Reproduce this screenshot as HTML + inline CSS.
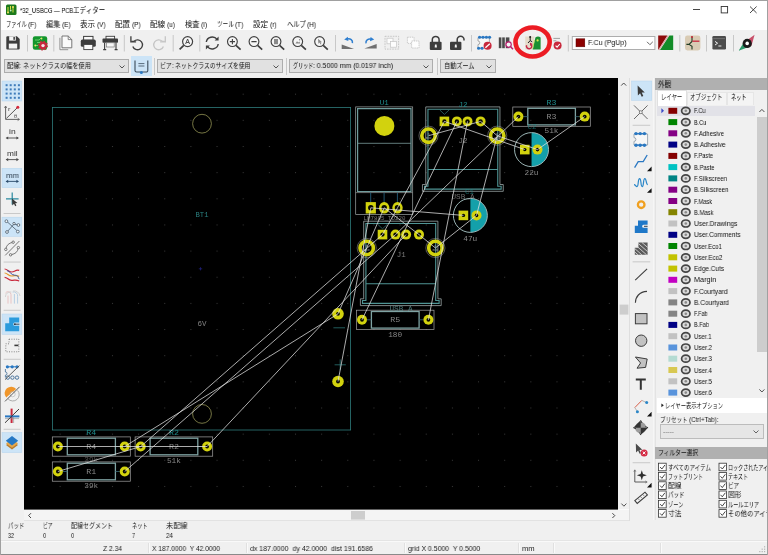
<!DOCTYPE html>
<html lang="ja"><head><meta charset="utf-8"><title>PCB</title>
<style>
*{box-sizing:border-box;margin:0;padding:0}
html,body{width:768px;height:555px;overflow:hidden;background:#fff}
body{position:relative;font-family:"Liberation Sans","Noto Sans CJK JP",sans-serif;font-size:8px;color:#222;line-height:1}
.abs{position:absolute}
.t{position:absolute;white-space:pre;transform-origin:0 50%;line-height:1;will-change:transform}
svg{position:absolute;overflow:visible}
#pcb{will-change:transform}
#frame{position:absolute;left:0;top:0;width:768px;height:555px;border:1px solid #a0a0a0;border-bottom:none;pointer-events:none}
#tb1{left:0;top:30px;width:768px;height:48px;background:#f0f0f0}
#ltb{left:0;top:78px;width:24px;height:441px;background:#f0f0f0}
#canvas{left:24px;top:78px;width:594px;height:432px;background:#000}
#vsb{left:618px;top:78px;width:11px;height:431px;background:#f0f0f0}
#hsb{left:24px;top:510px;width:605px;height:10px;background:#f4f4f4}
#rtb{left:629px;top:78px;width:26px;height:441px;background:#f0f0f0}
#rp{left:655px;top:78px;width:113px;height:441px;background:#f0f0f0}
#msg{left:0;top:518px;width:768px;height:22px;background:#f0f0f0}
#status{left:0;top:540px;width:768px;height:15px;background:#f0f0f0}
.sep{position:absolute;width:1px;background:#c8c8c8}
.combo{position:absolute;background:#e1e1e1;border:1px solid #adadad;height:14px}
.hdr{position:absolute;background:#b0b0b0;color:#111}
.arr{position:absolute;right:3px;top:4.5px;width:6px;height:4px}
</style></head><body>
<div id="title" class="abs" style="left:0;top:0;width:768px;height:30px;background:#fff"></div>
<div id="tb1" class="abs"></div>
<div id="ltb" class="abs"></div>
<div id="canvas" class="abs"></div>
<div id="vsb" class="abs"></div>
<div id="hsb" class="abs"></div>
<div id="rtb" class="abs"></div>
<div id="rp" class="abs"></div>
<div id="msg" class="abs"></div>
<div id="status" class="abs"></div>
<span class="t" style="left:19.50px;top:6.7px;font-size:7.6px;color:#000;transform:scaleX(0.7600);">*32_USBCG — PCB</span><span class="t" style="left:72.75px;top:6.7px;font-size:7.6px;color:#000;transform:scaleX(0.8615);">エディター</span>
<span class="t" style="left:5.50px;top:21.2px;font-size:7.6px;color:#111;transform:scaleX(0.6850);">ファイル </span><span class="t" style="left:27.75px;top:21.2px;font-size:7.6px;color:#111;transform:scaleX(0.8500);">(F)</span>
<span class="t" style="left:46.00px;top:21.2px;font-size:7.6px;color:#111;transform:scaleX(0.9469);">編集 </span><span class="t" style="left:62.39px;top:21.2px;font-size:7.6px;color:#111;transform:scaleX(0.8500);">(E)</span>
<span class="t" style="left:80.00px;top:21.2px;font-size:7.6px;color:#111;transform:scaleX(0.9758);">表示 </span><span class="t" style="left:96.89px;top:21.2px;font-size:7.6px;color:#111;transform:scaleX(0.8500);">(V)</span>
<span class="t" style="left:115.00px;top:21.2px;font-size:7.6px;color:#111;transform:scaleX(0.9758);">配置 </span><span class="t" style="left:131.89px;top:21.2px;font-size:7.6px;color:#111;transform:scaleX(0.8500);">(P)</span>
<span class="t" style="left:150.00px;top:21.2px;font-size:7.6px;color:#111;transform:scaleX(0.9884);">配線 </span><span class="t" style="left:167.11px;top:21.2px;font-size:7.6px;color:#111;transform:scaleX(0.8500);">(u)</span>
<span class="t" style="left:185.00px;top:21.2px;font-size:7.6px;color:#111;transform:scaleX(0.9475);">検査 </span><span class="t" style="left:201.40px;top:21.2px;font-size:7.6px;color:#111;transform:scaleX(0.8500);">(I)</span>
<span class="t" style="left:217.00px;top:21.2px;font-size:7.6px;color:#111;transform:scaleX(0.7409);">ツール </span><span class="t" style="left:235.45px;top:21.2px;font-size:7.6px;color:#111;transform:scaleX(0.8500);">(T)</span>
<span class="t" style="left:253.00px;top:21.2px;font-size:7.6px;color:#111;">設定 </span><span class="t" style="left:270.31px;top:21.2px;font-size:7.6px;color:#111;transform:scaleX(0.8807);">(r)</span>
<span class="t" style="left:286.50px;top:21.2px;font-size:7.6px;color:#111;transform:scaleX(0.8245);">ヘルプ </span><span class="t" style="left:307.04px;top:21.2px;font-size:7.6px;color:#111;transform:scaleX(0.8500);">(H)</span>
<div class="combo" style="left:4px;top:59px;width:125px"><svg class="arr" viewBox="0 0 6 4"><path d="M0.5 0.5 L3 3 L5.5 0.5" fill="none" stroke="#444" stroke-width="0.9"/></svg></div>
<span class="t" style="left:6.75px;top:62.3px;font-size:7.4px;color:#111;transform:scaleX(0.8359);">配線</span><span class="t" style="left:19.12px;top:62.3px;font-size:7.4px;color:#111;transform:scaleX(0.8500);">: </span><span class="t" style="left:22.61px;top:62.3px;font-size:7.4px;color:#111;transform:scaleX(0.8359);">ネットクラスの幅を使用</span>
<div class="abs" style="left:131px;top:56px;width:21px;height:20px;background:#cce4f7"></div>
<div class="sep" style="left:154px;top:58px;height:17px"></div>
<div class="combo" style="left:157px;top:59px;width:126px"><svg class="arr" viewBox="0 0 6 4"><path d="M0.5 0.5 L3 3 L5.5 0.5" fill="none" stroke="#444" stroke-width="0.9"/></svg></div>
<span class="t" style="left:160.00px;top:62.3px;font-size:7.4px;color:#111;transform:scaleX(0.7873);">ビア</span><span class="t" style="left:171.65px;top:62.3px;font-size:7.4px;color:#111;transform:scaleX(0.8500);">: </span><span class="t" style="left:175.14px;top:62.3px;font-size:7.4px;color:#111;transform:scaleX(0.7873);">ネットクラスのサイズを使用</span>
<div class="sep" style="left:286px;top:58px;height:17px"></div>
<div class="combo" style="left:289px;top:59px;width:144px"><svg class="arr" viewBox="0 0 6 4"><path d="M0.5 0.5 L3 3 L5.5 0.5" fill="none" stroke="#444" stroke-width="0.9"/></svg></div>
<span class="t" style="left:292.50px;top:62.3px;font-size:7.4px;color:#111;transform:scaleX(0.6849);">グリッド</span><span class="t" style="left:312.76px;top:62.3px;font-size:7.4px;color:#111;transform:scaleX(0.9300);">: 0.5000 mm (0.0197 inch)</span>
<div class="sep" style="left:437px;top:58px;height:17px"></div>
<div class="combo" style="left:440px;top:59px;width:56px"><svg class="arr" viewBox="0 0 6 4"><path d="M0.5 0.5 L3 3 L5.5 0.5" fill="none" stroke="#444" stroke-width="0.9"/></svg></div>
<span class="t" style="left:443.50px;top:62.3px;font-size:7.4px;color:#111;transform:scaleX(0.8303);">自動ズーム</span>
<svg id="tbi" style="left:0;top:0" width="768" height="78" viewBox="0 0 768 78">
<g fill="#3d3d3d" stroke="none">
<!-- window buttons -->
<rect x="693" y="9" width="7" height="0.9" fill="#333"/>
<rect x="721.2" y="6.5" width="6.4" height="6.4" fill="none" stroke="#333" stroke-width="0.9"/>
<path d="M750 6.5 L756.6 13 M756.6 6.5 L750 13" stroke="#333" stroke-width="0.9" fill="none"/>
<!-- app icon -->
<rect x="6" y="4.5" width="10.5" height="10.5" rx="1.5" fill="#1c7a1c"/>
<path d="M8 7 v6 M10.5 6 v3.5 M13 6.5 v6" stroke="#d8e040" stroke-width="1" fill="none"/>
<circle cx="8" cy="12.5" r="1" fill="#e8e060"/><circle cx="13" cy="7" r="1" fill="#e8e060"/><circle cx="10.7" cy="10.5" r="0.9" fill="#c8f0c0"/>
<!-- separators toolbar1 -->
<g fill="#c8c8c8">
<rect x="27" y="35" width="1" height="16.5"/><rect x="53.3" y="35" width="1" height="16.5"/><rect x="123.8" y="35" width="1" height="16.5"/>
<rect x="172.7" y="35" width="1" height="16.5"/><rect x="199.3" y="35" width="1" height="16.5"/><rect x="335" y="35" width="1" height="16.5"/>
<rect x="471" y="35" width="1" height="16.5"/><rect x="567.8" y="35" width="1" height="16.5"/><rect x="679.3" y="35" width="1" height="16.5"/>
<rect x="706" y="35" width="1" height="16.5"/><rect x="733" y="35" width="1" height="16.5"/>
</g>
<!-- save -->
<path d="M6.3 37.3 a1 1 0 0 1 1-1 h9.6 l2.8 2.8 v9.4 a1 1 0 0 1 -1 1 h-11.4 a1 1 0 0 1 -1-1 z"/>
<rect x="9.2" y="36.3" width="6.6" height="4.3" fill="#f4f4f4"/><rect x="13.4" y="37" width="1.5" height="2.8" fill="#3d3d3d"/>
<rect x="8.8" y="43.6" width="8.4" height="5" fill="#f4f4f4"/>
<!-- board setup -->
<rect x="32.8" y="36.3" width="14.4" height="13.4" rx="2.2" fill="#12962c"/>
<path d="M35 40 h4 l2-2 M35 45.5 h3 M37 42.5 h4" stroke="#7fd67f" stroke-width="0.8" fill="none"/>
<circle cx="35.3" cy="45.5" r="1" fill="#e6e66a"/><circle cx="41.5" cy="38.5" r="0.9" fill="#e6e66a"/>
<circle cx="43" cy="45.6" r="3.9" fill="#c8283c"/><circle cx="43" cy="45.6" r="4.4" fill="none" stroke="#c8283c" stroke-width="1.2" stroke-dasharray="1.6 1.85"/>
<circle cx="43" cy="45.6" r="1.7" fill="#f3e6e6"/>
<!-- new page -->
<path d="M59.9 37.8 v11.9 h8.3" fill="none" stroke="#7a7a7a" stroke-width="0.8"/>
<path d="M62 36 h6.2 l3.6 3.6 v8.2 h-9.8 z" fill="#fafafa" stroke="#6a6a6a" stroke-width="0.9"/>
<path d="M68.2 36 v3.6 h3.6" fill="none" stroke="#6a6a6a" stroke-width="0.8"/>
<!-- print -->
<rect x="83.6" y="36.4" width="9.4" height="4" fill="#fafafa" stroke="#3d3d3d" stroke-width="1"/>
<rect x="80.8" y="39.6" width="15" height="7.2" rx="1.6"/>
<rect x="83.8" y="44.4" width="9" height="5.2" fill="#fafafa" stroke="#3d3d3d" stroke-width="0.9"/>
<!-- plot -->
<rect x="106" y="36.3" width="8.6" height="3" fill="#fafafa" stroke="#3d3d3d" stroke-width="0.9"/>
<rect x="102.5" y="38.6" width="15.5" height="4.2" rx="0.8"/>
<rect x="106.4" y="42.8" width="7.8" height="4.2" fill="#f7f7f7" stroke="#777" stroke-width="0.7"/>
<path d="M104.6 42.8 v6.6 M116 42.8 v6.6 M103.2 49.6 h3 M114.6 49.6 h3" stroke="#3d3d3d" stroke-width="1.1" fill="none"/>
<!-- undo -->
<path d="M131.4 41.3 h2.6 a5 4.9 0 1 1 -1.2 5.2" fill="none" stroke="#404040" stroke-width="1.35"/>
<path d="M130.9 36.2 v5.6 h5.2" fill="none" stroke="#404040" stroke-width="1.35"/>
<!-- redo -->
<path d="M164.8 41.3 h-2.6 a5 4.9 0 1 0 1.2 5.2" fill="none" stroke="#c6c6c6" stroke-width="1.35"/>
<path d="M165.3 36.2 v5.6 h-5.2" fill="none" stroke="#c6c6c6" stroke-width="1.35"/>
<!-- find -->
<circle cx="187.6" cy="41.6" r="5" fill="#f6f6f6" stroke="#404040" stroke-width="1.2"/>
<path d="M183.8 45.4 L179.6 49.4" stroke="#404040" stroke-width="1.7" fill="none"/>
<path d="M185.6 44 l2-5 l2 5 M186.3 42.5 h2.6" stroke="#404040" stroke-width="0.9" fill="none"/>
<!-- refresh -->
<path d="M206.3 42 a6 5.6 0 0 1 10.8-2.6" fill="none" stroke="#404040" stroke-width="1.4"/>
<path d="M218.2 44 a6 5.6 0 0 1 -10.8 2.6" fill="none" stroke="#404040" stroke-width="1.4"/>
<path d="M218.6 36.4 v4 h-4 z M205.9 49.6 v-4 h4 z" fill="#404040"/>
<!-- zoom in/out/fit/obj/sel -->
<g fill="#f6f6f6" stroke="#404040" stroke-width="1.15">
<circle cx="232.4" cy="41.6" r="4.9"/><circle cx="254" cy="41.6" r="4.9"/><circle cx="276" cy="41.6" r="4.9"/><circle cx="297.7" cy="41.6" r="4.9"/><circle cx="319.6" cy="41.6" r="4.9"/>
</g>
<g stroke="#404040" stroke-width="1.7" fill="none">
<path d="M236 45.3 l4.6 4.3 M257.6 45.3 l4.6 4.3 M279.6 45.3 l4.6 4.3 M301.3 45.3 l4.6 4.3 M323.2 45.3 l4.6 4.3"/>
</g>
<path d="M229.8 41.6 h5.2 M232.4 39 v5.2 M251.4 41.6 h5.2" stroke="#404040" stroke-width="1.1" fill="none"/>
<rect x="274" y="39" width="4" height="5.2" fill="#8a8a8a"/>
<path d="M295.4 43.6 l1.6-2.4 l1.4 1.4 l1-1 l0.9 2 z" fill="#8a8a8a"/><circle cx="299.6" cy="39.8" r="0.7" fill="#8a8a8a"/>
<path d="M318 38.8 l0.4 5 l1.2-1.2 l1 1.8 l0.8-0.4 l-0.9-1.8 h1.6 z" fill="#8a8a8a"/>
<!-- rotate ccw -->
<path d="M341.7 49 v-4.6 l12.4 4.6 z" fill="#707070"/>
<path d="M352.4 43.2 c0.6-3.2 -2-5 -5.4-4.2" fill="none" stroke="#2f7fd0" stroke-width="1.5"/>
<path d="M344.2 39.4 l3.6-2.6 l0.6 4.2 z" fill="#2f7fd0"/>
<!-- rotate cw -->
<path d="M376.7 48.6 v-4.6 l-12.4 4.6 z" fill="#707070"/>
<path d="M366 43.4 c-0.6-3.2 2-5 5.4-4.2" fill="none" stroke="#2f7fd0" stroke-width="1.5"/>
<path d="M374.2 39.6 l-3.6-2.6 l-0.6 4.2 z" fill="#2f7fd0"/>
<!-- group (disabled) -->
<rect x="385" y="36.3" width="13.6" height="12.8" fill="none" stroke="#bdbdbd" stroke-width="0.8" stroke-dasharray="1.6 1"/>
<rect x="387" y="38.2" width="6" height="5.6" fill="#fdfdfd" stroke="#c4c4c4" stroke-width="0.7"/>
<rect x="390.6" y="41.6" width="6" height="5.6" fill="#fdfdfd" stroke="#c4c4c4" stroke-width="0.7"/>
<!-- ungroup (disabled) -->
<rect x="407.4" y="37.2" width="6.6" height="6.2" fill="#fbfbfb" stroke="#c0c0c0" stroke-width="0.8" stroke-dasharray="1.4 0.8"/>
<rect x="411.6" y="41" width="7.4" height="7" fill="#fdfdfd" stroke="#c0c0c0" stroke-width="0.8" stroke-dasharray="1.4 0.8"/>
<!-- lock -->
<path d="M432.3 42.4 v-2.6 a3.4 3.4 0 0 1 6.8 0 v2.6" fill="none" stroke="#3d3d3d" stroke-width="1.5"/>
<rect x="429.8" y="41.8" width="11.8" height="8.2" rx="1"/>
<path d="M435 44.6 h1.6 l0.3 3 h-2.2 z" fill="#f4f4f4"/>
<!-- unlock -->
<path d="M457.2 42.4 v-2.8 a3.4 3.4 0 0 1 6.8 0 v1" fill="none" stroke="#3d3d3d" stroke-width="1.5"/>
<rect x="450" y="41.8" width="11.4" height="8.2" rx="1"/>
<path d="M455 44.6 h1.6 l0.3 3 h-2.2 z" fill="#f4f4f4"/>
<!-- footprint editor -->
<path d="M478 37.6 h11.4 v10.4 h-11.4 v-3.4 a1.8 1.8 0 0 0 0-3.6 z" fill="#f7f7f7" stroke="#8a8a8a" stroke-width="0.7"/>
<g fill="#2a78c2"><circle cx="479.6" cy="37.2" r="1.55"/><circle cx="483" cy="37.2" r="1.55"/><circle cx="486.4" cy="37.2" r="1.55"/><circle cx="489.6" cy="37.2" r="1.55"/>
<circle cx="478.6" cy="48.2" r="1.55"/><circle cx="482" cy="48.2" r="1.55"/></g>
<path d="M478.6 37.2 h11.6" stroke="#2a78c2" stroke-width="1" />
<circle cx="487.6" cy="45.8" r="4" fill="#c8283c"/><path d="M485.4 47.8 l4.4-4" stroke="#fff" stroke-width="1.3"/>
<!-- library browser -->
<rect x="498.8" y="37.4" width="2.6" height="10.8" fill="#4a4a4a"/><rect x="502.2" y="37.4" width="2.6" height="10.8" fill="#4a4a4a"/><rect x="505.8" y="37.4" width="3.6" height="10.8" fill="#4a4a4a"/>
<circle cx="508.6" cy="44.6" r="2.7" fill="#f4f4f4" stroke="#b81e6e" stroke-width="1.2"/><path d="M510.6 46.8 l2.4 2.4" stroke="#b81e6e" stroke-width="1.5"/>
<!-- update pcb (circled) -->
<path d="M525.2 36.4 h9.4 l-2.6 13.2 h-6.8 z" fill="#e4dccb"/>
<path d="M535.4 37.4 q2.6-2 5.2 0 v12.2 h-8 z" fill="#1a8f32"/>
<path d="M530.2 36.6 v4 l-2.2 2.4 M530.2 40.6 l2 1.2" stroke="#222" stroke-width="1" fill="none"/><circle cx="530.2" cy="37" r="1" fill="#222"/>
<path d="M526.6 45.2 a2.7 2.7 0 1 0 4.8-0.6" fill="none" stroke="#c8284a" stroke-width="1.5"/><path d="M529.8 42.6 l3 1.5 l-2.6 2 z" fill="#c8284a"/>
<path d="M534.4 40 l-1.6 8.6" stroke="#c8d84a" stroke-width="0.8"/><circle cx="537.6" cy="40.4" r="1.1" fill="#d8e84a"/>
<ellipse cx="532.6" cy="42" rx="17.1" ry="14.5" fill="none" stroke="#ec1c24" stroke-width="4.6"/>
<!-- DRC -->
<path d="M553.4 38.4 h6.6 M553.4 40.8 h3" stroke="#8a8a8a" stroke-width="0.8"/>
<circle cx="557.6" cy="45.6" r="4" fill="#c8283c"/><path d="M555.6 45.6 l1.5 1.6 l2.7-3.2" stroke="#fff" stroke-width="1.1" fill="none"/>
<!-- layer combo -->
<rect x="572.3" y="36.5" width="82.6" height="13" fill="#fff" stroke="#adadad" stroke-width="1"/>
<rect x="576" y="38.8" width="8.8" height="8" fill="#8c0000" stroke="#5a0000" stroke-width="0.5"/>
<path d="M647 41.8 l2.9 2.9 l2.9-2.9" fill="none" stroke="#555" stroke-width="0.9"/>
<!-- layer pair -->
<path d="M658.2 35.6 h9.2 l-9.2 14.4 z" fill="#8c0a0a"/><path d="M673.2 35.6 v14.4 h-13.2 l9.4-14.4 z" fill="#128c28"/>
<path d="M668.4 35.6 l-9.6 14.4" stroke="#d9a0a0" stroke-width="1.1"/>
<!-- scripting / schematic -->
<rect x="685" y="35.6" width="15.4" height="14.8" rx="2.4" fill="#d9cbb4"/>
<path d="M692 36.4 v5 l-3 3 h-2.6 M689 44.4 l3 2 v3 M692 41.4" stroke="#1f3a22" stroke-width="1.1" fill="none"/>
<path d="M692.4 41.2 h7" stroke="#c8283c" stroke-width="1.3"/><circle cx="692" cy="37" r="1" fill="#c8283c"/>
<!-- console -->
<rect x="712.4" y="36" width="13.6" height="13.4" rx="1.2" fill="#4d4d4d"/>
<path d="M713.4 38.6 h11.6" stroke="#8a8a8a" stroke-width="0.6"/>
<path d="M715 41.4 l2.6 1.8 l-2.6 1.8 M718.4 46 h3" stroke="#fff" stroke-width="0.9" fill="none"/>
<!-- compass -->
<path d="M754.6 34.8 l-3.2 11.2 l-7.6-3.6 z" fill="#c8506a"/>
<path d="M738.6 50.8 l5.2-8.4 l7.6 3.6 z" fill="#2a9a6a"/>
<circle cx="747.2" cy="43.4" r="4.6" fill="#1a1a1a"/><circle cx="747.2" cy="43.4" r="1.8" fill="#fff"/>
<!-- toolbar2 track-width icon -->
<path d="M135 60.4 v10 a1.6 1.6 0 0 0 1.6 1.6 h9.6 a1.6 1.6 0 0 0 1.6-1.6 v-10" fill="none" stroke="#3a4a5a" stroke-width="1.1"/>
<path d="M138.4 63.6 h6 M138.4 66 h6" stroke="#3a4a5a" stroke-width="0.8"/>
<circle cx="141.4" cy="72.4" r="1.5" fill="#2a78c2"/>
</g>
</svg>
<span class="t" style="left:588.20px;top:39.2px;font-size:7.6px;color:#111;transform:scaleX(0.9239);">F.Cu (PgUp)</span>
<svg id="lti" style="left:0;top:78px" width="24" height="441" viewBox="0 78 24 441">
<g fill="none">
<!-- selected backgrounds -->
<g fill="#cce4f7" stroke="#b4d4ee" stroke-width="0.5">
<rect x="2" y="81" width="19.8" height="20"/><rect x="2" y="168.3" width="19.8" height="19.4"/><rect x="2" y="217.2" width="19.8" height="19.2"/>
<rect x="2" y="314" width="19.8" height="20.4"/><rect x="2" y="432.6" width="19.8" height="20"/>
</g>
<!-- separators -->
<g fill="#c4c4c4"><rect x="3.6" y="213" width="17" height="0.9"/><rect x="3.6" y="261.6" width="17" height="0.9"/><rect x="3.6" y="309.8" width="17" height="0.9"/><rect x="3.6" y="358.8" width="17" height="0.9"/><rect x="3.6" y="428.8" width="17" height="0.9"/></g>
<!-- grid dots -->
<g fill="#3f7cba">
<rect x="5.6" y="84.2" width="2" height="2"/><rect x="9.7" y="84.2" width="2" height="2"/><rect x="13.8" y="84.2" width="2" height="2"/><rect x="17.9" y="84.2" width="2" height="2"/>
<rect x="5.6" y="88.4" width="2" height="2"/><rect x="9.7" y="88.4" width="2" height="2"/><rect x="13.8" y="88.4" width="2" height="2"/><rect x="17.9" y="88.4" width="2" height="2"/>
<rect x="5.6" y="92.6" width="2" height="2"/><rect x="9.7" y="92.6" width="2" height="2"/><rect x="13.8" y="92.6" width="2" height="2"/><rect x="17.9" y="92.6" width="2" height="2"/>
<rect x="5.6" y="96.8" width="2" height="2"/><rect x="9.7" y="96.8" width="2" height="2"/><rect x="13.8" y="96.8" width="2" height="2"/><rect x="17.9" y="96.8" width="2" height="2"/>
</g>
<!-- polar -->
<path d="M5.6 106.4 v13 h13.4" stroke="#555" stroke-width="0.9"/><path d="M4.4 108 l1.2-2 l1.2 2 M17.6 118.2 l2 1.2 l-2 1.2" stroke="#555" stroke-width="0.7"/>
<path d="M6.4 118.4 L17.4 107.6" stroke="#555" stroke-width="1"/><circle cx="17.8" cy="107.2" r="1.5" fill="#d8283c"/>
<!-- units arrows -->
<g stroke="#4a4a4a" stroke-width="0.9"><path d="M6.6 138 h11.4 M6.6 159.6 h11.4"/></g>
<g fill="#4a4a4a"><path d="M5.6 138 l2.6-1.6 v3.2 z M19 138 l-2.6-1.6 v3.2 z M5.6 159.6 l2.6-1.6 v3.2 z M19 159.6 l-2.6-1.6 v3.2 z"/></g>
<path d="M6.6 181.4 h11.4" stroke="#2a4a6a" stroke-width="0.9"/><path d="M5.6 181.4 l2.6-1.6 v3.2 z M19 181.4 l-2.6-1.6 v3.2 z" fill="#2a4a6a"/>
<!-- cursor cross -->
<path d="M12.2 192.6 v12 M6 198.8 h12.6" stroke="#2a8aa0" stroke-width="1.2"/>
<path d="M12 198.4 l0.4 7 l1.6-1.6 l1.2 2.4 l1.2-0.6 l-1.2-2.4 l2.2-0.2 z" fill="#3a3a3a"/>
<!-- ratsnest -->
<g stroke="#4a5a6a" stroke-width="0.8"><path d="M7 221.6 L17.6 231.2 M7.4 231.6 L14 224 M14 224 L18 225"/><circle cx="6.4" cy="221.2" r="1.4" fill="#f2f8fc"/><circle cx="17.8" cy="231.6" r="1.4" fill="#f2f8fc"/><circle cx="7" cy="232" r="1.4" fill="#f2f8fc"/><circle cx="18.4" cy="225" r="1.4" fill="#f2f8fc"/><circle cx="14" cy="223.6" r="1.2" fill="#f2f8fc"/></g>
<!-- curved ratsnest -->
<g stroke="#5a5a5a" stroke-width="0.8"><path d="M5.2 255.4 L19.4 241 M6 248.4 q1-5 6.6-6 M11.4 254.6 q6-1 6.8-6.4"/><circle cx="5.8" cy="249.4" r="1.2" fill="#f4f4f4"/><circle cx="13.2" cy="242.2" r="1.2" fill="#f4f4f4"/><circle cx="10.6" cy="254.8" r="1.2" fill="#f4f4f4"/><circle cx="18.4" cy="247.6" r="1.2" fill="#f4f4f4"/></g>
<!-- net highlight -->
<path d="M4.6 269 c3 0 3.6 3 7 3 s4-3 7.6-1.6" stroke="#c8283c" stroke-width="1.2"/>
<path d="M4.6 273 c3 0 3.6 3 7 3 s4-1.4 7.6 0.4" stroke="#e89a2a" stroke-width="1.2"/>
<path d="M4.6 277.4 c3 0 3.6 3 7 3 s4-1 7.6 0.6" stroke="#c8283c" stroke-width="1.2"/>
<path d="M7 270.6 c3 0.4 4 4.4 7.6 4.6 s3 1 4.6 4" stroke="#3a5aa8" stroke-width="1"/>
<!-- faded traces -->
<path d="M8 303.6 v-8 M11 303.6 v-9 a3 3 0 0 0 -5.6-1.4" stroke="#e8c4c4" stroke-width="1"/>
<path d="M14.4 303.6 v-9.6 M17.6 303.6 v-7 a4 4 0 0 0 -5-4.6" stroke="#b8cfe4" stroke-width="1"/>
<path d="M5.4 297 a5 5 0 0 1 6-5 M13 291 a6 6 0 0 1 7 5" stroke="#d0d0d0" stroke-width="0.9"/>
<!-- zone fill -->
<path d="M9.2 317.6 h10 v5 h-4.4 a1.6 1.6 0 0 0 0 3.2 h4.4 v5.4 h-14 v-8 h4 z" fill="#2b9bdc"/>
<path d="M15 324.2 h4.4" stroke="#2a3a4a" stroke-width="0.9"/><circle cx="14.8" cy="324.2" r="0.9" fill="#2a3a4a"/>
<!-- zone outline -->
<path d="M9 339.2 h9.8 v12.6 h-13 v-8 h3.2 z" stroke="#6a6a6a" stroke-width="0.8" stroke-dasharray="1 1.4"/>
<path d="M14.4 345.4 h4" stroke="#3a3a3a" stroke-width="1.6"/>
<!-- pad outline -->
<g fill="#2a78c2"><circle cx="7.4" cy="366.8" r="1.6"/><circle cx="12.2" cy="366.8" r="1.6"/><circle cx="17" cy="366.8" r="1.6"/></g><path d="M6 366.8 h12.4" stroke="#2a78c2" stroke-width="1"/>
<path d="M5.4 369 v3 a1.6 1.6 0 0 1 0 3.2 v2" stroke="#2a5a8a" stroke-width="0.7"/>
<g stroke="#2a5a8a" stroke-width="0.8"><circle cx="7.8" cy="377.6" r="1.7"/><circle cx="12.4" cy="377.6" r="1.7"/><circle cx="17" cy="377.6" r="1.7"/></g>
<path d="M5 379.6 L19.4 365.6" stroke="#4a4a4a" stroke-width="0.9"/>
<!-- via outline -->
<path d="M6.2 397.6 a6.4 6.4 0 0 1 10-8.6 z" fill="#f0962a"/><circle cx="12.6" cy="394.2" r="2" fill="#f4f4f4"/>
<path d="M17.6 390.4 a6.2 6.2 0 0 1 -9.6 8.4" stroke="#9a9a9a" stroke-width="0.8"/><circle cx="12.6" cy="394.2" r="2.6" stroke="#b0b0b0" stroke-width="0.6"/>
<path d="M5 401.4 L19.6 386.8" stroke="#4a4a4a" stroke-width="0.9"/>
<!-- track outline -->
<path d="M11.6 408.6 v14.4" stroke="#c8283c" stroke-width="2"/><path d="M5 416.4 h14.4" stroke="#2a78c2" stroke-width="2"/>
<path d="M13.6 417 v6 M5 418.6 h14" stroke="#8a8a8a" stroke-width="0.6"/>
<path d="M5 422.8 L19 409" stroke="#3a3a3a" stroke-width="1"/>
<!-- layers -->
<path d="M12 440.4 l6 4.6 l-6 4.6 l-6-4.6 z" fill="#b87a2a"/><path d="M12 438.8 l6 4.6 l-6 4.4 l-6-4.4 z" fill="#e8a84a"/>
<path d="M12 436 l6.2 4.8 l-6.2 4.8 l-6.2-4.8 z" fill="#2678c4"/>
</g>
</svg>
<span class="t" style="left:7.80px;top:106.9px;font-size:5.4px;color:#444;transform:scaleX(1.3357);">r</span>
<span class="t" style="left:14.40px;top:114.3px;font-size:5.4px;color:#444;">θ</span>
<span class="t" style="left:8.60px;top:128px;font-size:8px;color:#333;transform:scaleX(1.0586);">in</span>
<span class="t" style="left:6.60px;top:149.8px;font-size:8px;color:#333;transform:scaleX(1.0373);">mil</span>
<span class="t" style="left:5.60px;top:172.2px;font-size:8px;color:#2a3a4a;transform:scaleX(0.9604);">mm</span>
<svg id="pcb" style="left:24px;top:78px" width="594" height="432" viewBox="24 78 594 432">
<defs><pattern id="gd" x="33.5" y="93.7" width="26.15" height="26.15" patternUnits="userSpaceOnUse"><rect x="0" y="0" width="1" height="1" fill="#3a3a3a"/></pattern><clipPath id="cv"><rect x="24" y="78" width="594" height="432"/></clipPath></defs>
<g clip-path="url(#cv)" fill="none" font-family="'Liberation Mono',monospace">
<rect x="24" y="78" width="594" height="432" fill="#000"/>
<rect x="24" y="78" width="594" height="432" fill="url(#gd)"/>
<rect x="52.4" y="107.5" width="298.2" height="322.5" stroke="#2f7c7c" stroke-width="0.8"/>
<circle cx="202" cy="123.7" r="9.4" stroke="#a8a860" stroke-width="0.7"/><circle cx="202" cy="413.9" r="9.4" stroke="#a8a860" stroke-width="0.7"/>
<text x="202.0" y="216.6" fill="#2a8080" font-size="6.4" text-anchor="middle" textLength="13" lengthAdjust="spacingAndGlyphs" opacity="1">BT1</text>
<text x="202.0" y="325.8" fill="#808080" font-size="6.4" text-anchor="middle" textLength="9" lengthAdjust="spacingAndGlyphs" opacity="1">6V</text>
<path d="M198.8 268.8 h3.4 M200.5 267.2 v3.2" stroke="#20207a" stroke-width="0.8"/>
<path d="M333.4 327.8 h11.6 M334.6 364.8 h11.2 M340.2 359.4 v10.8" stroke="#2a7474" stroke-width="0.8"/>
<rect x="52.3" y="436.9" width="78.0" height="19.3" stroke="#a4a4a4" stroke-width="0.7"/>
<rect x="67.3" y="438.2" width="48.1" height="16.6" stroke="#7fa3a3" stroke-width="1.3"/>
<path d="M62.9 446.5 H67.3 M115.4 446.5 H119.7" stroke="#3a6a7a" stroke-width="0.8"/>
<rect x="52.3" y="461.9" width="78.0" height="19.3" stroke="#a4a4a4" stroke-width="0.7"/>
<rect x="67.3" y="463.2" width="48.1" height="16.6" stroke="#7fa3a3" stroke-width="1.3"/>
<path d="M62.9 471.5 H67.3 M115.4 471.5 H119.7" stroke="#3a6a7a" stroke-width="0.8"/>
<rect x="135.1" y="436.9" width="77.6" height="19.3" stroke="#a4a4a4" stroke-width="0.7"/>
<rect x="150.1" y="438.2" width="47.7" height="16.6" stroke="#7fa3a3" stroke-width="1.3"/>
<path d="M145.7 446.5 H150.1 M197.79999999999998 446.5 H202.1" stroke="#3a6a7a" stroke-width="0.8"/>
<rect x="512.8" y="107.0" width="77.5" height="19.3" stroke="#a4a4a4" stroke-width="0.7"/>
<rect x="527.8" y="108.3" width="47.6" height="16.6" stroke="#7fa3a3" stroke-width="1.3"/>
<path d="M523.4 116.6 H527.8 M575.4000000000001 116.6 H579.7" stroke="#3a6a7a" stroke-width="0.8"/>
<rect x="356.4" y="310.2" width="77.6" height="19.3" stroke="#a4a4a4" stroke-width="0.7"/>
<rect x="371.4" y="311.5" width="47.7" height="16.6" stroke="#7fa3a3" stroke-width="1.3"/>
<path d="M367 319.8 H371.4 M419.09999999999997 319.8 H423.4" stroke="#3a6a7a" stroke-width="0.8"/>
<rect x="355.7" y="106.9" width="57.0" height="107.6" stroke="#a0a8a8" stroke-width="0.7"/>
<path d="M357.6 191.6 V108.7 H411 V191.6 Z" stroke="#6f9c9c" stroke-width="1.2"/><path d="M357.6 143.3 H411" stroke="#7a9a9a" stroke-width="0.8"/>
<path d="M355.7 192.6 H412.7" stroke="#8a8a8a" stroke-width="0.7"/>
<path d="M370.7 192.6 V203 M384.1 192.6 V203 M397.4 192.6 V203" stroke="#2a6a8a" stroke-width="0.8"/>
<circle cx="384.4" cy="125.9" r="10" fill="#d2d20e"/>
<text x="384.3" y="104.8" fill="#1f8a8a" font-size="6.6" text-anchor="middle" textLength="9" lengthAdjust="spacingAndGlyphs" opacity="1">U1</text>
<text x="384.5" y="220.4" fill="#787878" font-size="6" text-anchor="middle" textLength="42" lengthAdjust="spacingAndGlyphs" opacity="1">LM7805_TO220</text>
<path d="M425.75 184.5 V106.9 H499.95000000000005 V184.5 H503.25000000000006 V191.3 H422.45 V184.5 Z" stroke="#9aa6a6" stroke-width="0.8"/>
<path d="M427.95 186.2 V109.2 H497.75000000000006 V186.2 H501.15000000000003 V189.10000000000002 H424.55 V186.2 Z M427.95 169.5 H497.75000000000006" stroke="#4f9494" stroke-width="1.1"/>
<path d="M439.8 110 l4.6 4.4 l4.6-4.4" stroke="#3a7a7a" stroke-width="0.7"/>
<text x="462.9" y="106.6" fill="#1f8a8a" font-size="6.6" text-anchor="middle" textLength="9" lengthAdjust="spacingAndGlyphs" opacity="1">J2</text>
<text x="462.9" y="142.6" fill="#7c7c7c" font-size="6.6" text-anchor="middle" textLength="9" lengthAdjust="spacingAndGlyphs" opacity="1">J2</text>
<text x="463.0" y="199.0" fill="#6c6c6c" font-size="6.4" text-anchor="middle" textLength="23" lengthAdjust="spacingAndGlyphs" opacity="1">USB_A</text>
<path d="M363.7 298.79999999999995 V221.2 H437.90000000000003 V298.79999999999995 H441.20000000000005 V305.6 H360.4 V298.79999999999995 Z" stroke="#9aa6a6" stroke-width="0.8"/>
<path d="M365.9 300.5 V223.5 H435.70000000000005 V300.5 H439.1 V303.4 H362.5 V300.5 Z M365.9 283.8 H435.70000000000005" stroke="#4f9494" stroke-width="1.1"/>
<path d="M378 224.6 l4.5 4.2 l4.5-4.2" stroke="#3a7a7a" stroke-width="0.7"/>
<text x="401.3" y="256.8" fill="#7c7c7c" font-size="6.6" text-anchor="middle" textLength="9" lengthAdjust="spacingAndGlyphs" opacity="1">J1</text>
<text x="401.0" y="311.0" fill="#5c8c8c" font-size="6.4" text-anchor="middle" textLength="23" lengthAdjust="spacingAndGlyphs" opacity="0.85">USB_A</text>
<path d="M531.55 132.6 A17 17 0 0 1 531.55 166.6 Z" fill="#14a0aa"/>
<circle cx="531.55" cy="149.6" r="17" stroke="#9ab4b4" stroke-width="1"/>
<text x="532.0" y="129.0" fill="#1f8a8a" font-size="6.6" text-anchor="middle" textLength="9" lengthAdjust="spacingAndGlyphs" opacity="0.7">C2</text>
<text x="531.5" y="175.0" fill="#8a8a8a" font-size="7" text-anchor="middle" textLength="14" lengthAdjust="spacingAndGlyphs" opacity="1">22u</text>
<path d="M470.34999999999997 198.4 A17 17 0 0 1 470.34999999999997 232.4 Z" fill="#14a0aa"/>
<circle cx="470.34999999999997" cy="215.4" r="17" stroke="#9ab4b4" stroke-width="1"/>
<text x="469.5" y="194.4" fill="#1f8a8a" font-size="6.6" text-anchor="middle" textLength="9" lengthAdjust="spacingAndGlyphs" opacity="0.7">C1</text>
<text x="470.3" y="240.8" fill="#8a8a8a" font-size="7" text-anchor="middle" textLength="14" lengthAdjust="spacingAndGlyphs" opacity="1">47u</text>
<text x="91.3" y="448.9" fill="#868686" font-size="7" text-anchor="middle" textLength="10" lengthAdjust="spacingAndGlyphs" opacity="1">R4</text>
<text x="91.3" y="461.5" fill="#868686" font-size="7" text-anchor="middle" textLength="14" lengthAdjust="spacingAndGlyphs" opacity="0.6">39k</text>
<text x="91.3" y="434.8" fill="#1f8a8a" font-size="7" text-anchor="middle" textLength="10" lengthAdjust="spacingAndGlyphs" opacity="1">R4</text>
<text x="91.3" y="473.9" fill="#868686" font-size="7" text-anchor="middle" textLength="10" lengthAdjust="spacingAndGlyphs" opacity="1">R1</text>
<text x="91.3" y="488.0" fill="#868686" font-size="7" text-anchor="middle" textLength="14" lengthAdjust="spacingAndGlyphs" opacity="1">39k</text>
<text x="173.9" y="448.9" fill="#868686" font-size="7" text-anchor="middle" textLength="10" lengthAdjust="spacingAndGlyphs" opacity="1">R2</text>
<text x="173.9" y="463.0" fill="#868686" font-size="7" text-anchor="middle" textLength="14" lengthAdjust="spacingAndGlyphs" opacity="1">51k</text>
<text x="173.9" y="434.8" fill="#1f8a8a" font-size="7" text-anchor="middle" textLength="10" lengthAdjust="spacingAndGlyphs" opacity="1">R2</text>
<text x="551.5" y="119.0" fill="#868686" font-size="7" text-anchor="middle" textLength="10" lengthAdjust="spacingAndGlyphs" opacity="1">R3</text>
<text x="551.5" y="133.4" fill="#868686" font-size="7" text-anchor="middle" textLength="14" lengthAdjust="spacingAndGlyphs" opacity="1">51k</text>
<text x="551.5" y="104.6" fill="#1f8a8a" font-size="7" text-anchor="middle" textLength="10" lengthAdjust="spacingAndGlyphs" opacity="1">R3</text>
<text x="395.2" y="322.2" fill="#868686" font-size="7" text-anchor="middle" textLength="10" lengthAdjust="spacingAndGlyphs" opacity="1">R5</text>
<text x="395.2" y="336.6" fill="#868686" font-size="7" text-anchor="middle" textLength="14" lengthAdjust="spacingAndGlyphs" opacity="1">180</text>
<circle cx="57.9" cy="446.5" r="5.0" fill="#d2d20e"/><circle cx="57.9" cy="446.5" r="1.9" fill="#0a0a00"/>
<circle cx="124.7" cy="446.5" r="5.0" fill="#d2d20e"/><circle cx="124.7" cy="446.5" r="1.9" fill="#0a0a00"/>
<circle cx="57.9" cy="471.5" r="5.0" fill="#d2d20e"/><circle cx="57.9" cy="471.5" r="1.9" fill="#0a0a00"/>
<circle cx="124.7" cy="471.5" r="5.0" fill="#d2d20e"/><circle cx="124.7" cy="471.5" r="1.9" fill="#0a0a00"/>
<circle cx="140.7" cy="446.5" r="5.0" fill="#d2d20e"/><circle cx="140.7" cy="446.5" r="1.9" fill="#0a0a00"/>
<circle cx="207.1" cy="446.5" r="5.0" fill="#d2d20e"/><circle cx="207.1" cy="446.5" r="1.9" fill="#0a0a00"/>
<circle cx="518.4" cy="116.6" r="5.0" fill="#d2d20e"/><circle cx="518.4" cy="116.6" r="1.9" fill="#0a0a00"/>
<circle cx="584.7" cy="116.6" r="5.0" fill="#d2d20e"/><circle cx="584.7" cy="116.6" r="1.9" fill="#0a0a00"/>
<circle cx="362" cy="319.8" r="5.0" fill="#d2d20e"/><circle cx="362" cy="319.8" r="1.9" fill="#0a0a00"/>
<circle cx="428.4" cy="319.8" r="5.0" fill="#d2d20e"/><circle cx="428.4" cy="319.8" r="1.9" fill="#0a0a00"/>
<circle cx="338" cy="313.8" r="5.8" fill="#d2d20e"/><circle cx="338" cy="313.8" r="1.9" fill="#0a0a00"/>
<circle cx="338" cy="381.5" r="5.8" fill="#d2d20e"/><circle cx="338" cy="381.5" r="1.9" fill="#0a0a00"/>
<rect x="365.7" y="202.10000000000002" width="10.2" height="11.4" fill="#d2d20e"/><circle cx="370.8" cy="207.8" r="2.7" fill="#0a0a00"/>
<ellipse cx="384.2" cy="207.8" rx="5.2" ry="5.8" fill="#d2d20e"/><circle cx="384.2" cy="207.8" r="2.7" fill="#0a0a00"/>
<ellipse cx="397.5" cy="207.8" rx="5.2" ry="5.8" fill="#d2d20e"/><circle cx="397.5" cy="207.8" r="2.7" fill="#0a0a00"/>
<rect x="377.7" y="229.79999999999998" width="9.6" height="9.6" fill="#d2d20e"/><circle cx="382.5" cy="234.6" r="2.1" fill="#0a0a00"/>
<circle cx="395.5" cy="234.6" r="5.0" fill="#d2d20e"/><circle cx="395.5" cy="234.6" r="2.2" fill="#0a0a00"/>
<circle cx="406.1" cy="234.6" r="5.0" fill="#d2d20e"/><circle cx="406.1" cy="234.6" r="2.2" fill="#0a0a00"/>
<circle cx="419" cy="234.6" r="5.0" fill="#d2d20e"/><circle cx="419" cy="234.6" r="2.2" fill="#0a0a00"/>
<circle cx="366.7" cy="248" r="9.6" stroke="#a0a0a0" stroke-width="0.5"/><circle cx="366.7" cy="248" r="6.7" stroke="#d2d20e" stroke-width="3.6"/>
<text x="366.7" y="247.4" fill="#909090" font-size="3.6" text-anchor="middle" opacity="1">S</text>
<text x="366.7" y="251.4" fill="#909090" font-size="3.2" text-anchor="middle" opacity="1">GND</text>
<circle cx="435.4" cy="248" r="9.6" stroke="#a0a0a0" stroke-width="0.5"/><circle cx="435.4" cy="248" r="6.7" stroke="#d2d20e" stroke-width="3.6"/>
<text x="435.4" y="247.4" fill="#909090" font-size="3.6" text-anchor="middle" opacity="1">S</text>
<text x="435.4" y="251.4" fill="#909090" font-size="3.2" text-anchor="middle" opacity="1">GND</text>
<rect x="439.59999999999997" y="116.60000000000001" width="9.6" height="9.6" fill="#d2d20e"/><circle cx="444.4" cy="121.4" r="2.1" fill="#0a0a00"/>
<circle cx="456.9" cy="121.4" r="5.0" fill="#d2d20e"/><circle cx="456.9" cy="121.4" r="2.2" fill="#0a0a00"/>
<circle cx="467.5" cy="121.4" r="5.0" fill="#d2d20e"/><circle cx="467.5" cy="121.4" r="2.2" fill="#0a0a00"/>
<circle cx="480.6" cy="121.4" r="5.0" fill="#d2d20e"/><circle cx="480.6" cy="121.4" r="2.2" fill="#0a0a00"/>
<circle cx="428.5" cy="135.7" r="9.6" stroke="#a0a0a0" stroke-width="0.5"/><circle cx="428.5" cy="135.7" r="6.7" stroke="#d2d20e" stroke-width="3.6"/>
<text x="428.5" y="135.1" fill="#909090" font-size="3.6" text-anchor="middle" opacity="1">S</text>
<text x="428.5" y="139.1" fill="#909090" font-size="3.2" text-anchor="middle" opacity="1">GND</text>
<circle cx="497.2" cy="135.7" r="9.6" stroke="#a0a0a0" stroke-width="0.5"/><circle cx="497.2" cy="135.7" r="6.7" stroke="#d2d20e" stroke-width="3.6"/>
<text x="497.2" y="135.1" fill="#909090" font-size="3.6" text-anchor="middle" opacity="1">S</text>
<text x="497.2" y="139.1" fill="#909090" font-size="3.2" text-anchor="middle" opacity="1">GND</text>
<rect x="458.59999999999997" y="210.6" width="9.6" height="9.6" fill="#d2d20e"/><circle cx="463.4" cy="215.4" r="1.7" fill="#0a0a00"/>
<circle cx="476.5" cy="215.4" r="5.0" fill="#d2d20e"/><circle cx="476.5" cy="215.4" r="1.8" fill="#0a0a00"/>
<rect x="520.0" y="144.79999999999998" width="9.6" height="9.6" fill="#d2d20e"/><circle cx="524.8" cy="149.6" r="1.7" fill="#0a0a00"/>
<circle cx="537.5" cy="149.6" r="5.0" fill="#d2d20e"/><circle cx="537.5" cy="149.6" r="1.8" fill="#0a0a00"/>
<path d="M57.9 446.5 L207.1 446.5 M57.9 471.5 L140.7 446.5 M124.7 446.5 L338 313.8 M140.7 446.5 L382.5 234.6 M124.7 471.5 L395.5 234.6 M207.1 446.5 L406.1 234.6 M366.7 248 L338 313.8 M370.8 207.8 L338 381.5 M456.9 121.4 L362 319.8 M467.5 121.4 L428.4 319.8 M444.4 121.4 L397.5 207.8 M397.5 207.8 L382.5 234.6 M370.8 207.8 L463.4 215.4 M384.2 207.8 L419 234.6 M419 234.6 L435.4 248 M476.5 215.4 L435.4 248 M497.2 135.7 L476.5 215.4 M518.4 116.6 L395.5 234.6 M428.5 135.7 L480.6 121.4 M480.6 121.4 L497.2 135.7 M444.4 121.4 L524.8 149.6 M497.2 135.7 L537.5 149.6 M384.2 207.8 L366.7 248 M584.7 116.6 L537.5 149.6 " stroke="#e4e4e4" stroke-width="0.75"/>
</g></svg>
<svg id="rti" style="left:618px;top:78px" width="38" height="441" viewBox="618 78 38 441">
<g fill="none">
<rect x="629.2" y="78" width="0.8" height="442" fill="#dadada"/><rect x="653.2" y="78" width="1.6" height="442" fill="#f8f8f8"/><rect x="654.8" y="78" width="0.6" height="442" fill="#d0d0d0"/>
<!-- vscroll -->
<path d="M621.2 85.6 l2.5-2.6 l2.5 2.6" stroke="#505050" stroke-width="1"/>
<path d="M621.4 503.6 l2.5 2.6 l2.5-2.6" stroke="#505050" stroke-width="1"/>
<rect x="619.6" y="304.6" width="8.8" height="10" fill="#cdcdcd"/>
<!-- selected -->
<rect x="631.6" y="81" width="20.2" height="19.4" fill="#cce4f7" stroke="#b4d4ee" stroke-width="0.5"/>
<path d="M637.6 85.4 l0.3 10 l2.2-2.2 l1.6 3.6 l1.6-0.7 l-1.6-3.5 l3.1-0.2 z" fill="#3a3a3a"/>
<!-- local ratsnest -->
<path d="M634 105.4 L647.6 119 M647.6 105.4 L634 119" stroke="#5a5a5a" stroke-width="0.9"/><circle cx="640.8" cy="112.2" r="1.5" fill="#f4f4f4" stroke="#5a5a5a" stroke-width="0.7"/>
<!-- seps -->
<g fill="#c4c4c4"><rect x="632.6" y="124.8" width="17.6" height="0.9"/><rect x="632.6" y="261.4" width="17.6" height="0.9"/><rect x="632.6" y="462.3" width="17.6" height="0.9"/></g>
<!-- footprint -->
<path d="M634 134 h13.6 v11 h-13.6 v-3.6 a1.9 1.9 0 0 0 0-3.8 z" fill="#f7f7f7" stroke="#7a8a9a" stroke-width="0.7"/>
<g fill="#2a78c2"><circle cx="636" cy="133.6" r="1.7"/><circle cx="640.2" cy="133.6" r="1.7"/><circle cx="644.4" cy="133.6" r="1.7"/><circle cx="636" cy="145.2" r="1.7"/><circle cx="640.2" cy="145.2" r="1.7"/><circle cx="644.4" cy="145.2" r="1.7"/></g>
<path d="M634.6 133.6 h11.8 M634.6 145.2 h11.8" stroke="#2a78c2" stroke-width="1.2"/>
<!-- route -->
<path d="M634.6 167.6 l3.6-6 h5 l4-6.6" stroke="#2a78c2" stroke-width="1.3"/>
<path d="M651.6 166.6 v4.6 h-4.6 z M651.6 188.2 v4.6 h-4.6 z M651.6 411.8 v4.6 h-4.6 z M651.6 482.8 v4.6 h-4.6 z" fill="#111"/>
<!-- tune -->
<path d="M634 184.6 c1.6 0 1.6 2 3 2 c1.8 0 0.6-8 2.6-8 s0.8 8 2.6 8 s0.8-8 2.6-8 s1 6 3 6" stroke="#2a86c8" stroke-width="1.2"/>
<!-- via -->
<circle cx="641.2" cy="204.7" r="3.3" stroke="#f0a020" stroke-width="2.3"/>
<!-- zone -->
<path d="M638 220.6 h9.6 v4.2 h-4 a1.5 1.5 0 0 0 0 3 h4 v5.2 h-12.8 v-7.2 h3.2 z" fill="#1f78c8"/>
<path d="M644 226.3 h3.6" stroke="#1a2a3a" stroke-width="0.9"/>
<!-- rule area -->
<path d="M638.4 242.4 h9.2 v12.4 h-12.8 v-7 h3.6 z" fill="#5a5a5a"/>
<path d="M638.4 243.6 l9.2 8 M641.8 242.4 l5.8 5 M636.6 246 l10 8.8 M634.8 248.6 l7 6.2 M634.8 252 l3.2 2.8" stroke="#e4e4e4" stroke-width="0.8"/>
<!-- line, arc -->
<path d="M635.2 280.2 L647.1 268.9" stroke="#3d3d3d" stroke-width="1.1"/>
<path d="M635.4 302.8 c0-6 4-11 11.6-11.4" stroke="#3d3d3d" stroke-width="1.1"/>
<rect x="635.4" y="313.6" width="11.6" height="10.2" fill="#c2c2c2" stroke="#3d3d3d" stroke-width="1"/>
<circle cx="641.2" cy="340.7" r="5.7" fill="#c2c2c2" stroke="#3d3d3d" stroke-width="1"/>
<path d="M635.4 357 L647.2 359 L645.6 367.4 L637 368.2 L640.6 363 Z" fill="#c2c2c2" stroke="#3d3d3d" stroke-width="1"/>
<!-- T -->
<path d="M635.8 379.6 h10 M640.8 379.6 v10.2" stroke="#333" stroke-width="2"/>
<!-- dimension -->
<path d="M634.8 407.6 L641.8 400.4" stroke="#d8604a" stroke-width="1"/><path d="M634.8 407.6 L637.4 411.6 M641.8 400.4 L646.6 402.6" stroke="#8a8a8a" stroke-width="0.6"/>
<circle cx="637.4" cy="411.8" r="1.5" fill="#2a86c8"/><circle cx="646.7" cy="402.5" r="1.5" fill="#2a86c8"/>
<!-- origin target -->
<circle cx="640.7" cy="427.7" r="5.6" fill="#9c9c9c"/>
<path d="M640.7 427.7 L640.7 420.3 L633.3 427.7 Z M640.7 427.7 L648.1 427.7 L640.7 435.1 Z" fill="#333"/>
<path d="M640.7 420.3 L642 423 M648.1 427.7 L645.4 426.6 M640.7 435.1 L639.6 432.6 M633.3 427.7 L636 428.8" stroke="#333" stroke-width="1"/>
<!-- delete -->
<path d="M635.8 443.6 l0.3 9 l2-2 l1.5 3.2 l1.4-0.6 l-1.5-3.2 l2.8-0.2 z" fill="#4a4a4a"/>
<circle cx="644.1" cy="452.9" r="3.5" fill="#d42a44"/><path d="M642.7 451.5 l2.8 2.8 M645.5 451.5 l-2.8 2.8" stroke="#fff" stroke-width="1"/>
<!-- grid origin -->
<path d="M634.8 470.4 v11.6 h11.6" stroke="#4a4a4a" stroke-width="0.9"/><path d="M633.8 471.6 l1-1.8 l1 1.8 M645.4 481 l1.8 1 l-1.8 1" stroke="#4a4a4a" stroke-width="0.6"/>
<path d="M641.8 470.2 l1.2 3.8 l3.8 1.2 l-3.8 1.2 l-1.2 3.8 l-1.2-3.8 l-3.8-1.2 l3.8-1.2 z" fill="#2d2d2d"/>
<!-- ruler -->
<path d="M634.8 500.6 l10.2-8.4 l2.4 2.8 l-10.2 8.4 z" stroke="#3d3d3d" stroke-width="1.1"/>
<path d="M638.2 498.6 l1 1.2 M640.6 496.6 l1 1.2 M643 494.6 l1 1.2" stroke="#3d3d3d" stroke-width="0.7"/>
</g>
</svg>
<!-- right panel -->
<div class="hdr" style="left:655px;top:78px;width:113px;height:12px"></div>
<span class="t" style="left:658.20px;top:80.6px;font-size:7.6px;color:#111;transform:scaleX(0.8757);">外観</span>
<div class="abs" style="left:656.5px;top:90px;width:30.5px;height:15.5px;background:#fff;border:1px solid #e0e0e0;border-bottom:none"></div>
<div class="abs" style="left:687px;top:92px;width:40px;height:13px;background:#f4f4f4;border:1px solid #e6e6e6;border-bottom:none"></div>
<div class="abs" style="left:727px;top:92px;width:27px;height:13px;background:#f4f4f4;border:1px solid #e6e6e6;border-bottom:none"></div>
<span class="t" style="left:660.90px;top:94px;font-size:7.6px;color:#111;transform:scaleX(0.7063);">レイヤー</span>
<span class="t" style="left:690.30px;top:94px;font-size:7.6px;color:#111;transform:scaleX(0.7111);">オブジェクト</span>
<span class="t" style="left:730.80px;top:94px;font-size:7.6px;color:#111;transform:scaleX(0.6760);">ネット</span>
<div class="abs" style="left:657px;top:105.5px;width:111px;height:292.5px;background:#f0f0f0"></div>
<div class="abs" style="left:657px;top:106px;width:97.5px;height:10.2px;background:#e2e2e8"></div>
<div class="abs" style="left:755.5px;top:103px;width:12.5px;height:295px;background:#f0f0f0"></div>
<div class="abs" style="left:756.5px;top:117px;width:10.5px;height:235px;background:#cdcdcd"></div>
<svg style="left:655px;top:103px" width="113" height="295" viewBox="655 103 113 295"><g fill="none">
<path d="M759.4 112 l2.5-2.6 l2.5 2.6 M759.4 389.4 l2.5 2.6 l2.5-2.6" stroke="#505050" stroke-width="1"/>
<path d="M661.4 108.2 l2.6 2.5 l-2.6 2.5 z" fill="#3a4ac8"/>
<rect x="668.4" y="107.8" width="8.8" height="6" fill="#840000"/>
<ellipse cx="685.8" cy="110.8" rx="4.2" ry="3.5" stroke="#454545" stroke-width="1.7" fill="#dcdcdc"/><circle cx="685.8" cy="110.8" r="1.3" fill="#8a8a8a"/>
<rect x="668.4" y="119.1" width="8.8" height="6" fill="#008400"/>
<ellipse cx="685.8" cy="122.1" rx="4.2" ry="3.5" stroke="#454545" stroke-width="1.7" fill="#dcdcdc"/><circle cx="685.8" cy="122.1" r="1.3" fill="#8a8a8a"/>
<rect x="668.4" y="130.3" width="8.8" height="6" fill="#840084"/>
<ellipse cx="685.8" cy="133.3" rx="4.2" ry="3.5" stroke="#454545" stroke-width="1.7" fill="#dcdcdc"/><circle cx="685.8" cy="133.3" r="1.3" fill="#8a8a8a"/>
<rect x="668.4" y="141.6" width="8.8" height="6" fill="#000084"/>
<ellipse cx="685.8" cy="144.6" rx="4.2" ry="3.5" stroke="#454545" stroke-width="1.7" fill="#dcdcdc"/><circle cx="685.8" cy="144.6" r="1.3" fill="#8a8a8a"/>
<rect x="668.4" y="152.9" width="8.8" height="6" fill="#840000"/>
<ellipse cx="685.8" cy="155.9" rx="4.2" ry="3.5" stroke="#454545" stroke-width="1.7" fill="#dcdcdc"/><circle cx="685.8" cy="155.9" r="1.3" fill="#8a8a8a"/>
<rect x="668.4" y="164.1" width="8.8" height="6" fill="#00c2c2"/>
<ellipse cx="685.8" cy="167.1" rx="4.2" ry="3.5" stroke="#454545" stroke-width="1.7" fill="#dcdcdc"/><circle cx="685.8" cy="167.1" r="1.3" fill="#8a8a8a"/>
<rect x="668.4" y="175.4" width="8.8" height="6" fill="#008484"/>
<ellipse cx="685.8" cy="178.4" rx="4.2" ry="3.5" stroke="#454545" stroke-width="1.7" fill="#dcdcdc"/><circle cx="685.8" cy="178.4" r="1.3" fill="#8a8a8a"/>
<rect x="668.4" y="186.7" width="8.8" height="6" fill="#840084"/>
<ellipse cx="685.8" cy="189.7" rx="4.2" ry="3.5" stroke="#454545" stroke-width="1.7" fill="#dcdcdc"/><circle cx="685.8" cy="189.7" r="1.3" fill="#8a8a8a"/>
<rect x="668.4" y="198.0" width="8.8" height="6" fill="#840084"/>
<ellipse cx="685.8" cy="201.0" rx="4.2" ry="3.5" stroke="#454545" stroke-width="1.7" fill="#dcdcdc"/><circle cx="685.8" cy="201.0" r="1.3" fill="#8a8a8a"/>
<rect x="668.4" y="209.2" width="8.8" height="6" fill="#848400"/>
<ellipse cx="685.8" cy="212.2" rx="4.2" ry="3.5" stroke="#454545" stroke-width="1.7" fill="#dcdcdc"/><circle cx="685.8" cy="212.2" r="1.3" fill="#8a8a8a"/>
<rect x="668.4" y="220.5" width="8.8" height="6" fill="#c2c2c2"/>
<ellipse cx="685.8" cy="223.5" rx="4.2" ry="3.5" stroke="#454545" stroke-width="1.7" fill="#dcdcdc"/><circle cx="685.8" cy="223.5" r="1.3" fill="#8a8a8a"/>
<rect x="668.4" y="231.8" width="8.8" height="6" fill="#000084"/>
<ellipse cx="685.8" cy="234.8" rx="4.2" ry="3.5" stroke="#454545" stroke-width="1.7" fill="#dcdcdc"/><circle cx="685.8" cy="234.8" r="1.3" fill="#8a8a8a"/>
<rect x="668.4" y="243.0" width="8.8" height="6" fill="#008400"/>
<ellipse cx="685.8" cy="246.0" rx="4.2" ry="3.5" stroke="#454545" stroke-width="1.7" fill="#dcdcdc"/><circle cx="685.8" cy="246.0" r="1.3" fill="#8a8a8a"/>
<rect x="668.4" y="254.3" width="8.8" height="6" fill="#c2c200"/>
<ellipse cx="685.8" cy="257.3" rx="4.2" ry="3.5" stroke="#454545" stroke-width="1.7" fill="#dcdcdc"/><circle cx="685.8" cy="257.3" r="1.3" fill="#8a8a8a"/>
<rect x="668.4" y="265.6" width="8.8" height="6" fill="#c2c200"/>
<ellipse cx="685.8" cy="268.6" rx="4.2" ry="3.5" stroke="#454545" stroke-width="1.7" fill="#dcdcdc"/><circle cx="685.8" cy="268.6" r="1.3" fill="#8a8a8a"/>
<rect x="668.4" y="276.8" width="8.8" height="6" fill="#c200c2"/>
<ellipse cx="685.8" cy="279.8" rx="4.2" ry="3.5" stroke="#454545" stroke-width="1.7" fill="#dcdcdc"/><circle cx="685.8" cy="279.8" r="1.3" fill="#8a8a8a"/>
<rect x="668.4" y="288.1" width="8.8" height="6" fill="#c2c2c2"/>
<ellipse cx="685.8" cy="291.1" rx="4.2" ry="3.5" stroke="#454545" stroke-width="1.7" fill="#dcdcdc"/><circle cx="685.8" cy="291.1" r="1.3" fill="#8a8a8a"/>
<rect x="668.4" y="299.4" width="8.8" height="6" fill="#848484"/>
<ellipse cx="685.8" cy="302.4" rx="4.2" ry="3.5" stroke="#454545" stroke-width="1.7" fill="#dcdcdc"/><circle cx="685.8" cy="302.4" r="1.3" fill="#8a8a8a"/>
<rect x="668.4" y="310.7" width="8.8" height="6" fill="#848484"/>
<ellipse cx="685.8" cy="313.7" rx="4.2" ry="3.5" stroke="#454545" stroke-width="1.7" fill="#dcdcdc"/><circle cx="685.8" cy="313.7" r="1.3" fill="#8a8a8a"/>
<rect x="668.4" y="321.9" width="8.8" height="6" fill="#000084"/>
<ellipse cx="685.8" cy="324.9" rx="4.2" ry="3.5" stroke="#454545" stroke-width="1.7" fill="#dcdcdc"/><circle cx="685.8" cy="324.9" r="1.3" fill="#8a8a8a"/>
<rect x="668.4" y="333.2" width="8.8" height="6" fill="#c2c2c2"/>
<ellipse cx="685.8" cy="336.2" rx="4.2" ry="3.5" stroke="#454545" stroke-width="1.7" fill="#dcdcdc"/><circle cx="685.8" cy="336.2" r="1.3" fill="#8a8a8a"/>
<rect x="668.4" y="344.5" width="8.8" height="6" fill="#5994dc"/>
<ellipse cx="685.8" cy="347.5" rx="4.2" ry="3.5" stroke="#454545" stroke-width="1.7" fill="#dcdcdc"/><circle cx="685.8" cy="347.5" r="1.3" fill="#8a8a8a"/>
<rect x="668.4" y="355.7" width="8.8" height="6" fill="#b4dbd2"/>
<ellipse cx="685.8" cy="358.7" rx="4.2" ry="3.5" stroke="#454545" stroke-width="1.7" fill="#dcdcdc"/><circle cx="685.8" cy="358.7" r="1.3" fill="#8a8a8a"/>
<rect x="668.4" y="367.0" width="8.8" height="6" fill="#d8c852"/>
<ellipse cx="685.8" cy="370.0" rx="4.2" ry="3.5" stroke="#454545" stroke-width="1.7" fill="#dcdcdc"/><circle cx="685.8" cy="370.0" r="1.3" fill="#8a8a8a"/>
<rect x="668.4" y="378.3" width="8.8" height="6" fill="#c2c2c2"/>
<ellipse cx="685.8" cy="381.3" rx="4.2" ry="3.5" stroke="#454545" stroke-width="1.7" fill="#dcdcdc"/><circle cx="685.8" cy="381.3" r="1.3" fill="#8a8a8a"/>
<rect x="668.4" y="389.6" width="8.8" height="6" fill="#5994dc"/>
<ellipse cx="685.8" cy="392.6" rx="4.2" ry="3.5" stroke="#454545" stroke-width="1.7" fill="#dcdcdc"/><circle cx="685.8" cy="392.6" r="1.3" fill="#8a8a8a"/>
</g></svg>
<span class="t" style="left:694.00px;top:107.35px;font-size:7.3px;color:#111;transform:scaleX(0.7659);">F.Cu</span>
<span class="t" style="left:694.00px;top:118.65px;font-size:7.3px;color:#111;transform:scaleX(0.7392);">B.Cu</span>
<span class="t" style="left:694.00px;top:129.85px;font-size:7.3px;color:#111;transform:scaleX(0.8403);">F.Adhesive</span>
<span class="t" style="left:694.00px;top:141.15px;font-size:7.3px;color:#111;transform:scaleX(0.8532);">B.Adhesive</span>
<span class="t" style="left:694.00px;top:152.45px;font-size:7.3px;color:#111;transform:scaleX(0.7805);">F.Paste</span>
<span class="t" style="left:694.00px;top:163.65px;font-size:7.3px;color:#111;transform:scaleX(0.8020);">B.Paste</span>
<span class="t" style="left:694.00px;top:174.95px;font-size:7.3px;color:#111;transform:scaleX(0.8388);">F.Silkscreen</span>
<span class="t" style="left:694.00px;top:186.25px;font-size:7.3px;color:#111;transform:scaleX(0.8505);">B.Silkscreen</span>
<span class="t" style="left:694.00px;top:197.55px;font-size:7.3px;color:#111;transform:scaleX(0.7789);">F.Mask</span>
<span class="t" style="left:694.00px;top:208.75px;font-size:7.3px;color:#111;transform:scaleX(0.8015);">B.Mask</span>
<span class="t" style="left:694.00px;top:220.05px;font-size:7.3px;color:#111;transform:scaleX(0.9167);">User.Drawings</span>
<span class="t" style="left:694.00px;top:231.35px;font-size:7.3px;color:#111;transform:scaleX(0.8889);">User.Comments</span>
<span class="t" style="left:694.00px;top:242.55px;font-size:7.3px;color:#111;transform:scaleX(0.8316);">User.Eco1</span>
<span class="t" style="left:694.00px;top:253.85px;font-size:7.3px;color:#111;transform:scaleX(0.8464);">User.Eco2</span>
<span class="t" style="left:694.00px;top:265.15px;font-size:7.3px;color:#111;transform:scaleX(0.8803);">Edge.Cuts</span>
<span class="t" style="left:694.00px;top:276.35px;font-size:7.3px;color:#111;transform:scaleX(0.9860);">Margin</span>
<span class="t" style="left:694.00px;top:287.65px;font-size:7.3px;color:#111;transform:scaleX(0.8882);">F.Courtyard</span>
<span class="t" style="left:694.00px;top:298.95px;font-size:7.3px;color:#111;transform:scaleX(0.8989);">B.Courtyard</span>
<span class="t" style="left:694.00px;top:310.25px;font-size:7.3px;color:#111;transform:scaleX(0.7397);">F.Fab</span>
<span class="t" style="left:694.00px;top:321.45px;font-size:7.3px;color:#111;transform:scaleX(0.7705);">B.Fab</span>
<span class="t" style="left:694.00px;top:332.75px;font-size:7.3px;color:#111;transform:scaleX(0.8296);">User.1</span>
<span class="t" style="left:694.00px;top:344.05px;font-size:7.3px;color:#111;transform:scaleX(0.8533);">User.2</span>
<span class="t" style="left:694.00px;top:355.25px;font-size:7.3px;color:#111;transform:scaleX(0.8533);">User.3</span>
<span class="t" style="left:694.00px;top:366.55px;font-size:7.3px;color:#111;transform:scaleX(0.8533);">User.4</span>
<span class="t" style="left:694.00px;top:377.85px;font-size:7.3px;color:#111;transform:scaleX(0.8533);">User.5</span>
<span class="t" style="left:694.00px;top:389.15px;font-size:7.3px;color:#111;transform:scaleX(0.8533);">User.6</span>
<div class="abs" style="left:657px;top:398px;width:111px;height:15px;background:#fff"></div>
<svg style="left:657px;top:398px" width="20" height="15" viewBox="657 398 20 15"><path d="M661.4 403.4 l2.4 1.9 l-2.4 1.9 z" fill="#222"/></svg>
<span class="t" style="left:665.00px;top:401.7px;font-size:7.4px;color:#111;transform:scaleX(0.7154);">レイヤー表示オプション</span>
<span class="t" style="left:659.50px;top:415.7px;font-size:7.4px;color:#222;transform:scaleX(0.7434);">プリセット </span><span class="t" style="left:688.50px;top:415.7px;font-size:7.4px;color:#222;transform:scaleX(0.8500);">(Ctrl+Tab):</span>
<div class="combo" style="left:659.5px;top:424.4px;width:104px;height:14.2px;background:#e6e6e6;border-color:#bcbcbc"><svg class="arr" style="right:3.5px;top:5px" viewBox="0 0 6 4"><path d="M0.5 0.5 L3 3 L5.5 0.5" fill="none" stroke="#555" stroke-width="0.9"/></svg></div>
<span class="t" style="left:663.00px;top:427.9px;font-size:7.4px;color:#777;transform:scaleX(0.8934);">-----</span>
<div class="hdr" style="left:655px;top:446.6px;width:113px;height:12.2px"></div>
<span class="t" style="left:658.00px;top:449.1px;font-size:7.4px;color:#111;transform:scaleX(0.7753);">フィルター選択</span>
<svg style="left:655px;top:460px" width="113" height="60" viewBox="655 460 113 60"><g fill="#fff" stroke="#333" stroke-width="0.8">
<rect x="658.6" y="463.2" width="7.6" height="7.6"/><path d="M660.1 467.0 l1.8 2 l3-4" fill="none" stroke-width="0.9"/>
<rect x="719" y="463.2" width="7.6" height="7.6"/><path d="M720.5 467.0 l1.8 2 l3-4" fill="none" stroke-width="0.9"/>
<rect x="658.6" y="472.5" width="7.6" height="7.6"/><path d="M660.1 476.3 l1.8 2 l3-4" fill="none" stroke-width="0.9"/>
<rect x="719" y="472.5" width="7.6" height="7.6"/><path d="M720.5 476.3 l1.8 2 l3-4" fill="none" stroke-width="0.9"/>
<rect x="658.6" y="481.8" width="7.6" height="7.6"/><path d="M660.1 485.6 l1.8 2 l3-4" fill="none" stroke-width="0.9"/>
<rect x="719" y="481.8" width="7.6" height="7.6"/><path d="M720.5 485.6 l1.8 2 l3-4" fill="none" stroke-width="0.9"/>
<rect x="658.6" y="491.0" width="7.6" height="7.6"/><path d="M660.1 494.8 l1.8 2 l3-4" fill="none" stroke-width="0.9"/>
<rect x="719" y="491.0" width="7.6" height="7.6"/><path d="M720.5 494.8 l1.8 2 l3-4" fill="none" stroke-width="0.9"/>
<rect x="658.6" y="500.3" width="7.6" height="7.6"/><path d="M660.1 504.1 l1.8 2 l3-4" fill="none" stroke-width="0.9"/>
<rect x="719" y="500.3" width="7.6" height="7.6"/><path d="M720.5 504.1 l1.8 2 l3-4" fill="none" stroke-width="0.9"/>
<rect x="658.6" y="509.6" width="7.6" height="7.6"/><path d="M660.1 513.4 l1.8 2 l3-4" fill="none" stroke-width="0.9"/>
<rect x="719" y="509.6" width="7.6" height="7.6"/><path d="M720.5 513.4 l1.8 2 l3-4" fill="none" stroke-width="0.9"/>
</g></svg>
<span class="t" style="left:668.40px;top:463.55px;font-size:7.3px;color:#111;transform:scaleX(0.7565);">すべてのアイテム</span>
<span class="t" style="left:728.40px;top:463.55px;font-size:7.3px;color:#111;transform:scaleX(0.6920);">ロックされたアイテム</span>
<span class="t" style="left:668.40px;top:472.85px;font-size:7.3px;color:#111;transform:scaleX(0.6852);">フットプリント</span>
<span class="t" style="left:728.40px;top:472.85px;font-size:7.3px;color:#111;transform:scaleX(0.6904);">テキスト</span>
<span class="t" style="left:668.40px;top:482.15px;font-size:7.3px;color:#111;transform:scaleX(0.9251);">配線</span>
<span class="t" style="left:728.40px;top:482.15px;font-size:7.3px;color:#111;transform:scaleX(0.7537);">ビア</span>
<span class="t" style="left:668.40px;top:491.35px;font-size:7.3px;color:#111;transform:scaleX(0.7537);">パッド</span>
<span class="t" style="left:728.40px;top:491.35px;font-size:7.3px;color:#111;transform:scaleX(0.9251);">図形</span>
<span class="t" style="left:668.40px;top:500.65px;font-size:7.3px;color:#111;transform:scaleX(0.7199);">ゾーン</span>
<span class="t" style="left:728.40px;top:500.65px;font-size:7.3px;color:#111;transform:scaleX(0.7081);">ルールエリア</span>
<span class="t" style="left:668.40px;top:509.95px;font-size:7.3px;color:#111;transform:scaleX(0.9251);">寸法</span>
<span class="t" style="left:728.40px;top:509.95px;font-size:7.3px;color:#111;transform:scaleX(0.8672);">その他のアイテム</span>
<svg style="left:0px;top:509px" width="768" height="12" viewBox="0 509 768 12"><g fill="none">
<rect x="0" y="509.6" width="24" height="11.4" fill="#f0f0f0"/>
<rect x="24" y="509.6" width="605.3" height="10.9" fill="#f4f4f4"/>
<rect x="24" y="520.2" width="606" height="0.7" fill="#dcdcdc"/>
<rect x="629.2" y="509.6" width="0.8" height="11" fill="#dadada"/>
<path d="M31 513.2 l-2.4 2.4 l2.4 2.4" stroke="#444" stroke-width="1"/>
<path d="M612.4 513.2 l2.4 2.4 l-2.4 2.4" stroke="#444" stroke-width="1"/>
<rect x="351" y="511" width="14" height="8.6" fill="#cdcdcd"/>
</g></svg>

<span class="t" style="left:7.50px;top:522.3px;font-size:7.4px;color:#222;transform:scaleX(0.7346);">パッド</span>
<span class="t" style="left:7.50px;top:532.3px;font-size:7.4px;color:#222;transform:scaleX(0.7287);">32</span>
<span class="t" style="left:43.00px;top:522.3px;font-size:7.4px;color:#222;transform:scaleX(0.6420);">ビア</span>
<span class="t" style="left:43.00px;top:532.3px;font-size:7.4px;color:#222;transform:scaleX(0.7758);">0</span>
<span class="t" style="left:71.30px;top:522.3px;font-size:7.4px;color:#222;transform:scaleX(0.8116);">配線セグメント</span>
<span class="t" style="left:71.30px;top:532.3px;font-size:7.4px;color:#222;transform:scaleX(0.7758);">0</span>
<span class="t" style="left:132.00px;top:522.3px;font-size:7.4px;color:#222;transform:scaleX(0.6986);">ネット</span>
<span class="t" style="left:132.00px;top:532.3px;font-size:7.4px;color:#222;transform:scaleX(0.7758);">7</span>
<span class="t" style="left:165.50px;top:522.3px;font-size:7.4px;color:#222;transform:scaleX(0.9690);">未配線</span>
<span class="t" style="left:165.50px;top:532.3px;font-size:7.4px;color:#222;transform:scaleX(0.8501);">24</span>
<div class="abs" style="left:0;top:540px;width:768px;height:1px;background:#e4e4e4"></div><div class="abs" style="left:0;top:541px;width:768px;height:1px;background:#f9f9f9"></div>
<div class="sep" style="left:147.5px;top:543px;height:10px;background:#e0e0e0;border-right:1px solid #fafafa;width:2px"></div>
<div class="sep" style="left:245.5px;top:543px;height:10px;background:#e0e0e0;border-right:1px solid #fafafa;width:2px"></div>
<div class="sep" style="left:403.5px;top:543px;height:10px;background:#e0e0e0;border-right:1px solid #fafafa;width:2px"></div>
<div class="sep" style="left:518px;top:543px;height:10px;background:#e0e0e0;border-right:1px solid #fafafa;width:2px"></div>
<div class="sep" style="left:553px;top:543px;height:10px;background:#e0e0e0;border-right:1px solid #fafafa;width:2px"></div>
<div class="sep" style="left:659.5px;top:543px;height:10px;background:#e0e0e0;border-right:1px solid #fafafa;width:2px"></div>
<span class="t" style="left:103.30px;top:544.5px;font-size:7.4px;color:#222;transform:scaleX(0.9163);">Z 2.34</span>
<span class="t" style="left:151.80px;top:544.5px;font-size:7.4px;color:#222;transform:scaleX(0.9023);">X 187.0000  Y 42.0000</span>
<span class="t" style="left:249.50px;top:544.5px;font-size:7.4px;color:#222;transform:scaleX(0.9472);">dx 187.0000  dy 42.0000  dist 191.6586</span>
<span class="t" style="left:407.70px;top:544.5px;font-size:7.4px;color:#222;transform:scaleX(0.9340);">grid X 0.5000  Y 0.5000</span>
<span class="t" style="left:522.00px;top:544.5px;font-size:7.4px;color:#222;transform:scaleX(1.0302);">mm</span>
<svg style="left:756px;top:544px" width="11" height="10" viewBox="0 0 11 10"><g fill="#b4b4b4"><rect x="8" y="7" width="1.2" height="1.2"/><rect x="8" y="4.6" width="1.2" height="1.2"/><rect x="8" y="2.2" width="1.2" height="1.2"/><rect x="5.6" y="7" width="1.2" height="1.2"/><rect x="5.6" y="4.6" width="1.2" height="1.2"/><rect x="3.2" y="7" width="1.2" height="1.2"/></g></svg>
<div class="abs" style="left:0;top:553.5px;width:768px;height:1.5px;background:#8a8a8a"></div>
<div id="frame"></div>
</body></html>
